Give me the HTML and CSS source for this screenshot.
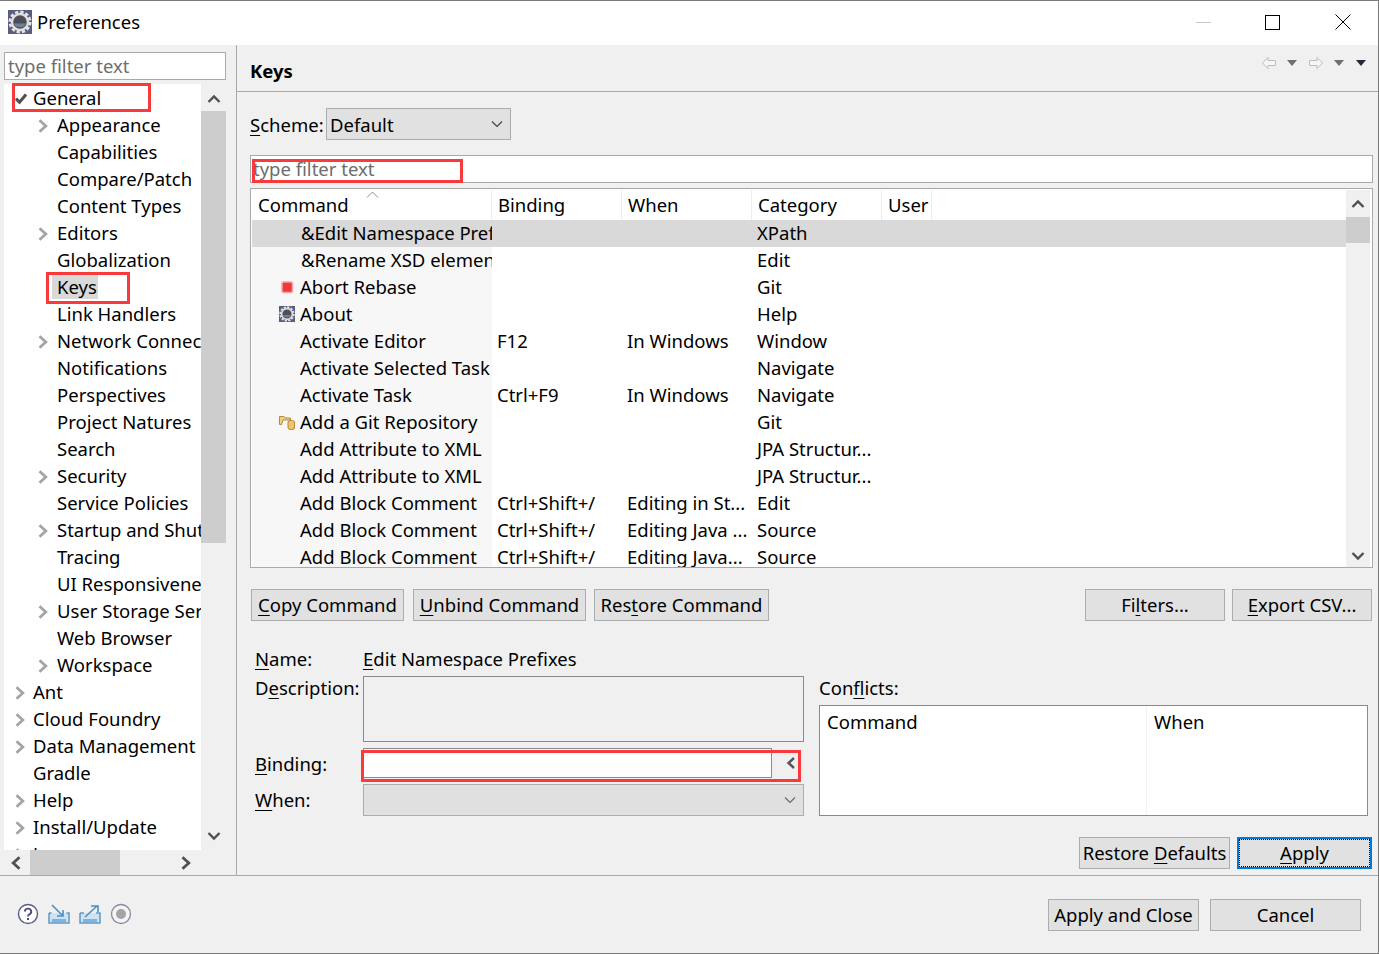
FILE: index.html
```html
<!DOCTYPE html>
<html lang="en">
<head>
<meta charset="utf-8">
<title>Preferences</title>
<link rel="stylesheet" href="styles.css">
</head>
<body>
<svg class="defs" width="0" height="0">
  <defs>
    <symbol id="gear" viewBox="0 0 24 24">
      <rect width="24" height="24" fill="#5b5d80"/>
      <circle cx="12" cy="12" r="10" fill="none" stroke="#e4e4e4" stroke-width="3" stroke-dasharray="3.300 1.930"/>
      <circle cx="12" cy="12" r="8" fill="#4d4e57" stroke="#dedede" stroke-width="2.400"/>
      <path d="M6 13.500h12a6.200 5 0 0 1-12 0z" fill="#70809a"/>
    </symbol>
    <symbol id="chev" viewBox="0 0 10 14"><path d="M1.500 1.200 7.800 7 1.500 12.800" fill="none" stroke="currentColor" stroke-width="2.800"/></symbol>
    <symbol id="up" viewBox="0 0 14 10"><path d="M1.500 8 7 2.500 12.500 8" fill="none" stroke="currentColor" stroke-width="2.400"/></symbol>
    <symbol id="down" viewBox="0 0 14 10"><path d="M1.500 2 7 7.500 12.500 2" fill="none" stroke="currentColor" stroke-width="2.400"/></symbol>
  </defs>
</svg>
<div class="window">
  <header class="titlebar">
    <svg class="app-icon"><use href="#gear"/></svg>
    <span class="title">Preferences</span>
    <div class="controls">
      <span class="min"></span>
      <span class="max"></span>
      <svg class="close" viewBox="0 0 16 16"><path d="M.5.500 15.500 15.500M15.500.500.500 15.500" stroke="#000" fill="none"/></svg>
    </div>
  </header>

  <div class="main">
    <aside class="left">
      <div class="filter left-filter">type filter text</div>
      <div class="tree-wrap">
        <div class="tree-view">
          <ul class="tree">
            <li class="root open"><svg class="tw tw-open" viewBox="0 0 12 12"><path d="M1 5.500 4.500 9.300 11 1.500" fill="none" stroke="#505050" stroke-width="3"/></svg>General</li>
            <li class="sub"><svg class="tw"><use href="#chev"/></svg>Appearance</li>
            <li class="sub">Capabilities</li>
            <li class="sub">Compare/Patch</li>
            <li class="sub">Content Types</li>
            <li class="sub"><svg class="tw"><use href="#chev"/></svg>Editors</li>
            <li class="sub">Globalization</li>
            <li class="sub"><span class="tree-sel">Keys</span></li>
            <li class="sub">Link Handlers</li>
            <li class="sub"><svg class="tw"><use href="#chev"/></svg>Network Connections</li>
            <li class="sub">Notifications</li>
            <li class="sub">Perspectives</li>
            <li class="sub">Project Natures</li>
            <li class="sub">Search</li>
            <li class="sub"><svg class="tw"><use href="#chev"/></svg>Security</li>
            <li class="sub">Service Policies</li>
            <li class="sub"><svg class="tw"><use href="#chev"/></svg>Startup and Shutdown</li>
            <li class="sub">Tracing</li>
            <li class="sub">UI Responsiveness Monitoring</li>
            <li class="sub"><svg class="tw"><use href="#chev"/></svg>User Storage Service</li>
            <li class="sub">Web Browser</li>
            <li class="sub"><svg class="tw"><use href="#chev"/></svg>Workspace</li>
            <li class="root"><svg class="tw"><use href="#chev"/></svg>Ant</li>
            <li class="root"><svg class="tw"><use href="#chev"/></svg>Cloud Foundry</li>
            <li class="root"><svg class="tw"><use href="#chev"/></svg>Data Management</li>
            <li class="root">Gradle</li>
            <li class="root"><svg class="tw"><use href="#chev"/></svg>Help</li>
            <li class="root"><svg class="tw"><use href="#chev"/></svg>Install/Update</li>
            <li class="root"><svg class="tw"><use href="#chev"/></svg>Java</li>
          </ul>
        </div>
        <div class="vbar tree-vbar">
          <svg class="arrow"><use href="#up"/></svg>
          <div class="thumb"></div>
          <svg class="arrow arrow-end"><use href="#down"/></svg>
        </div>
      </div>
      <div class="hbar">
        <svg class="harrow harrow-l" viewBox="0 0 10 14"><path d="M8.500 1.200 2.200 7 8.500 12.800" fill="none" stroke="currentColor" stroke-width="2.800"/></svg>
        <div class="hthumb"></div>
        <svg class="harrow harrow-r"><use href="#chev"/></svg>
      </div>
    </aside>

    <section class="right">
      <div class="page-head">
        <h1>Keys</h1>
        <div class="nav">
          <svg class="nav-arrow" viewBox="0 0 16 14"><path d="M7 1.500 1.500 7 7 12.500V9.500H14.500V4.500H7z" fill="#f6f6f6" stroke="#bdbdbd"/></svg>
          <span class="tri"></span>
          <svg class="nav-arrow nav-next" viewBox="0 0 16 14"><path d="M9 1.500 14.500 7 9 12.500V9.500H1.500V4.500H9z" fill="#f6f6f6" stroke="#bdbdbd"/></svg>
          <span class="tri"></span>
          <span class="tri tri-dark"></span>
        </div>
      </div>
      <div class="content">
        <div class="scheme">
          <span class="scheme-label"><u>S</u>cheme:</span>
          <div class="combo scheme-combo"><span>Default</span><svg class="combo-arrow" viewBox="0 0 12 8"><path d="M1 1.500 6 6.500 11 1.500" fill="none" stroke="#444" stroke-width="1.200"/></svg></div>
        </div>
        <div class="filter key-filter">type filter text</div>

        <div class="keys-table">
          <div class="table-main">
            <div class="row thead">
              <div class="th c1">Command<svg class="sort" viewBox="0 0 12 7"><path d="M.5 6.500 6 1 11.500 6.500" fill="none" stroke="#8a8a8a"/></svg></div>
              <div class="th c2">Binding</div>
              <div class="th c3">When</div>
              <div class="th c4">Category</div>
              <div class="th c5">User</div>
            </div>
            <div class="row selected"><div class="td c1 amp-first">&amp;Edit Namespace Prefixes</div><div class="td c2"></div><div class="td c3"></div><div class="td c4">XPath</div></div>
            <div class="row"><div class="td c1 amp-first">&amp;Rename XSD element</div><div class="td c2"></div><div class="td c3"></div><div class="td c4">Edit</div></div>
            <div class="row"><div class="td c1"><svg class="ricon" viewBox="0 0 16 16"><rect x="3" y="3" width="10.500" height="10.500" rx="1.500" fill="#f03a3a" stroke="#f5a5a5" stroke-width="1.500"/></svg>Abort Rebase</div><div class="td c2"></div><div class="td c3"></div><div class="td c4">Git</div></div>
            <div class="row"><div class="td c1"><svg class="ricon"><use href="#gear"/></svg>About</div><div class="td c2"></div><div class="td c3"></div><div class="td c4">Help</div></div>
            <div class="row"><div class="td c1">Activate Editor</div><div class="td c2">F12</div><div class="td c3">In Windows</div><div class="td c4">Window</div></div>
            <div class="row"><div class="td c1">Activate Selected Task</div><div class="td c2"></div><div class="td c3"></div><div class="td c4">Navigate</div></div>
            <div class="row"><div class="td c1">Activate Task</div><div class="td c2">Ctrl+F9</div><div class="td c3">In Windows</div><div class="td c4">Navigate</div></div>
            <div class="row"><div class="td c1"><svg class="ricon" viewBox="0 0 16 16"><path d="M.5 10.500V2.500H5L6 4H11.500V6H4L2.500 10.500z" fill="#f2cf80" stroke="#a88236" stroke-width=".9"/><path d="M9 8a3.200 1.500 0 0 1 6.500 0V14a3.200 1.500 0 0 1-6.500 0z" fill="#f0c46a" stroke="#a88236" stroke-width=".9"/></svg>Add a Git Repository</div><div class="td c2"></div><div class="td c3"></div><div class="td c4">Git</div></div>
            <div class="row"><div class="td c1">Add Attribute to XML</div><div class="td c2"></div><div class="td c3"></div><div class="td c4">JPA Structur...</div></div>
            <div class="row"><div class="td c1">Add Attribute to XML</div><div class="td c2"></div><div class="td c3"></div><div class="td c4">JPA Structur...</div></div>
            <div class="row"><div class="td c1">Add Block Comment</div><div class="td c2">Ctrl+Shift+/</div><div class="td c3">Editing in St...</div><div class="td c4">Edit</div></div>
            <div class="row"><div class="td c1">Add Block Comment</div><div class="td c2">Ctrl+Shift+/</div><div class="td c3">Editing Java ...</div><div class="td c4">Source</div></div>
            <div class="row"><div class="td c1">Add Block Comment</div><div class="td c2">Ctrl+Shift+/</div><div class="td c3">Editing Java...</div><div class="td c4">Source</div></div>
          </div>
          <div class="vbar table-vbar">
            <svg class="arrow"><use href="#up"/></svg>
            <div class="thumb"></div>
            <svg class="arrow arrow-end"><use href="#down"/></svg>
          </div>
        </div>

        <div class="cmd-buttons">
          <button class="btn b-copy"><u>C</u>opy Command</button>
          <button class="btn b-unbind"><u>U</u>nbind Command</button>
          <button class="btn b-restore">Res<u>t</u>ore Command</button>
          <span class="spacer"></span>
          <button class="btn b-filters">Fi<u>l</u>ters...</button>
          <button class="btn b-export"><u>E</u>xport CSV...</button>
        </div>

        <div class="details">
          <div class="form">
            <div class="f-row f-name"><span class="f-label"><u>N</u>ame:</span><span class="f-value"><u>E</u>dit Namespace Prefixes</span></div>
            <div class="f-row f-desc"><span class="f-label">D<u>e</u>scription:</span><div class="descbox"></div></div>
            <div class="f-row f-bind"><span class="f-label"><u>B</u>inding:</span><div class="bindbox"></div><svg class="bind-arrow" viewBox="0 0 10 14"><path d="M8 2 2.500 7 8 12" fill="none" stroke="#555" stroke-width="2.400"/></svg></div>
            <div class="f-row f-when"><span class="f-label"><u>W</u>hen:</span><div class="combo when-combo"><svg class="combo-arrow" viewBox="0 0 12 8"><path d="M1 1.500 6 6.500 11 1.500" fill="none" stroke="#666" stroke-width="1.100"/></svg></div></div>
          </div>
          <div class="conflicts">
            <div class="conf-label">Con<u>f</u>licts:</div>
            <div class="conf-table">
              <div class="conf-col conf-c1">Command</div>
              <div class="conf-col conf-c2">When</div>
            </div>
          </div>
        </div>

        <div class="page-buttons">
          <button class="btn b-defaults">Restore <u>D</u>efaults</button>
          <button class="btn b-apply"><span class="focus-in"><u>A</u>pply</span></button>
        </div>
      </div>
    </section>
  </div>

  <footer class="footer">
    <div class="foot-icons">
      <svg class="ficon" viewBox="0 0 22 22"><circle cx="11" cy="11" r="9.500" fill="#fff" stroke="#5a5a8c" stroke-width="1.400"/><path d="M7.800 8.500a3.200 3 0 1 1 4.600 2.800c-1 .6-1.400 1-1.400 2.200" fill="none" stroke="#4a4a80" stroke-width="1.900"/><rect x="10" y="15" width="2" height="2" fill="#4a4a80"/></svg>
      <svg class="ficon" viewBox="0 0 22 22"><path d="M1 10H3.500M18.500 10H21V20H1V10M5 10" fill="#cfe2f2" stroke="#5c9ac8" stroke-width="1.500"/><path d="M4 16H18V19H4z" fill="#7fb3d9"/><path d="M4 2 14 12M9 13H15V7" fill="none" stroke="#4c8fc2" stroke-width="1.600"/></svg>
      <svg class="ficon" viewBox="0 0 22 22"><path d="M1 10H5M17 10H21V20H1V10" fill="#cfe2f2" stroke="#5c9ac8" stroke-width="1.500"/><path d="M4 16H18V19H4z" fill="#7fb3d9"/><path d="M6 14 18 3M12 3H19V9" fill="none" stroke="#4c8fc2" stroke-width="1.600"/></svg>
      <svg class="ficon" viewBox="0 0 22 22"><circle cx="11" cy="11" r="9.500" fill="#f4f4f4" stroke="#8a8aa4" stroke-width="1.300"/><circle cx="11" cy="11" r="5" fill="#a4a4a4"/></svg>
    </div>
    <div class="foot-buttons">
      <button class="btn b-close">Apply and Close</button>
      <button class="btn b-cancel">Cancel</button>
    </div>
  </footer>

  <span class="mark mark-general"></span>
  <span class="mark mark-keys"></span>
  <span class="mark mark-filter"></span>
  <span class="mark mark-binding"></span>
</div>
</body>
</html>
```

FILE: styles.css
```css
* { box-sizing: border-box; }
html, body { margin: 0; padding: 0; }
body {
  width: 1379px;
  height: 954px;
  overflow: hidden;
  background: #fff;
  font-family: "Noto Sans", "Open Sans", sans-serif;
  font-size: 18.5px;
  color: #000;
}
.defs { position: absolute; }
u { text-decoration-thickness: 1px; text-underline-offset: 3px; }
button { font: inherit; color: inherit; }

.window {
  position: relative;
  width: 1379px;
  height: 954px;
  display: flex;
  flex-direction: column;
  border-top: 1px solid #7a7a7a;
  border-right: 1px solid #7a7a7a;
  border-bottom: 1px solid #7a7a7a;
  background: #f0f0f0;
}

/* title bar */
.titlebar {
  height: 44px;
  flex: none;
  display: flex;
  align-items: center;
  background: #fff;
  padding: 0 0 2px 8px;
}
.app-icon { width: 24px; height: 24px; margin-right: 5px; }
.title { margin-bottom: 2px; }
.controls { margin-left: auto; display: flex; align-items: center; }
.min { width: 15px; height: 1px; background: #c8c8c8; margin-right: 54px; }
.max { width: 15px; height: 15px; border: 1px solid #000; margin-right: 55px; }
.close { width: 16px; height: 16px; margin-right: 27px; }

/* panes */
.main { flex: 1; display: flex; min-height: 0; }
.left {
  width: 237px;
  flex: none;
  padding: 7px 10px 0 4px;
  border-right: 1px solid #a8a8a8;
}
.filter {
  height: 28px;
  background: #fff;
  border: 1px solid #a9a9a9;
  color: #6d6d6d;
  line-height: 26px;
  padding-left: 2px;
}
.left-filter { width: 222px; padding-left: 3px; }

.tree-wrap { display: flex; height: 766px; margin-top: 4px; width: 222px; }
.tree-view { width: 197px; overflow: hidden; background: #fff; }
.tree { list-style: none; margin: 1px 0 0; padding: 0; width: 400px; }
.tree li {
  height: 27px;
  line-height: 25px;
  white-space: nowrap;
  position: relative;
}
.tree .root { padding-left: 29px; }
.tree .sub { padding-left: 53px; }
.tree-sel { display: inline-block; height: 24px; line-height: 24px; background: #d9d9d9; padding: 0 1px 0 5px; margin-left: -5px; }
.tw { position: absolute; width: 10px; height: 14px; top: 7px; color: #a4a4a4; }
.root .tw { left: 11px; }
.sub .tw { left: 34px; }
.root .tw-open { left: 11px; width: 12px; height: 12px; top: 8px; }

.vbar { display: flex; flex-direction: column; align-items: center; background: #f0f0f0; }
.tree-vbar { width: 25px; }
.arrow { width: 14px; height: 10px; flex: none; color: #505050; margin: 10px 0 7px; }
.arrow-end { margin: auto 0 9px; }
.tree-vbar .thumb { width: 100%; height: 432px; background: #cdcdcd; }

.hbar { height: 25px; width: 222px; display: flex; align-items: center; background: #f0f0f0; }
.harrow { width: 10px; height: 14px; color: #505050; flex: none; }
.harrow-l { margin-left: 7px; margin-right: 9px; }
.hthumb { width: 90px; height: 100%; background: #cdcdcd; }
.harrow-r { margin-left: 61px; }

/* right */
.right { flex: 1; min-width: 0; display: flex; flex-direction: column; }
.page-head {
  height: 47px;
  flex: none;
  display: flex;
  align-items: center;
  padding: 4px 0 0 13px;
  border-bottom: 1px solid #a8a8a8;
}
h1 { margin: 0; font-size: 18.5px; font-weight: 700; }
.nav { margin-left: auto; display: flex; align-items: center; align-self: flex-start; margin-top: 7px; margin-right: 12px; }
.nav-arrow { width: 16px; height: 14px; margin-right: 10px; }
.nav-next { margin-left: 11px; }
.tri { width: 0; height: 0; border: 5.5px solid transparent; border-top: 6px solid #707070; border-bottom: 0; }
.tri-dark { border-top-color: #2e2438; margin-left: 12px; }

.content { padding: 0 6px 0 13px; }
.scheme { display: flex; align-items: center; height: 32px; margin-top: 16px; }
.scheme-label { width: 76px; flex: none; }
.combo { display: flex; align-items: center; background: #e1e1e1; border: 1px solid #adadad; }
.scheme-combo { width: 185px; height: 32px; padding-left: 3px; }
.combo-arrow { width: 12px; height: 8px; margin-left: auto; margin-right: 7px; }

.key-filter { width: 1123px; margin-top: 15px; }
.keys-table {
  width: 1123px;
  height: 380px;
  margin-top: 5px;
  border: 1px solid #a9a9a9;
  background: #fff;
  display: flex;
  padding: 1px 2px 0 1px;
}
.table-main { width: 1094px; overflow: hidden; }
.row { display: flex; height: 27px; line-height: 25px; white-space: nowrap; }
.thead { height: 30px; line-height: 30px; background: #fff; }
.th { position: relative; border-right: 1px solid #ececec; padding-left: 6px; }
.td { overflow: hidden; padding-left: 5px; position: relative; }
.c1 { width: 240px; flex: none; }
.c2, .c3, .c4 { width: 130px; flex: none; }
.c5 { width: 50px; flex: none; }
.td.c1 { padding-left: 48px; background: #f7f7f7; }
.td.amp-first { padding-left: 49px; }
.selected { background: #d9d9d9; }
.selected .td.c1 { background: #d9d9d9; }
.sort { position: absolute; left: 114px; top: 1px; width: 13px; height: 7px; }
.ricon { position: absolute; left: 27px; top: 5px; width: 16px; height: 16px; }
.table-vbar { width: 24px; }
.table-vbar .thumb { width: 100%; height: 26px; background: #cdcdcd; }
.table-vbar .arrow { margin: 9px 0 8px; }
.table-vbar .arrow-end { margin: auto 0 6px; }

.cmd-buttons { display: flex; margin-top: 21px; width: 1122px; padding-left: 1px; }
.btn {
  height: 32px;
  background: #e1e1e1;
  border: 1px solid #adadad;
  padding: 0;
  text-align: center;
  white-space: nowrap;
  line-height: 28px;
}
.spacer { flex: 1; }
.b-copy { width: 153px; }
.b-unbind { width: 173px; margin-left: 9px; }
.b-restore { width: 175px; margin-left: 8px; }
.b-filters { width: 140px; }
.b-export { width: 140px; margin-left: 7px; }

.details { display: flex; margin-top: 23px; position: relative; }
.form { width: 569px; padding-left: 5px; }
.f-row { display: flex; }
.f-label { width: 108px; flex: none; }
.f-name { height: 32px; line-height: 30px; }
.f-desc { height: 66px; line-height: 24px; }
.descbox { width: 441px; height: 66px; border: 1px solid #8a8a8a; }
.f-bind { height: 30px; margin-top: 6px; line-height: 30px; align-items: center; }
.f-bind .f-label { margin-top: 2px; }
.bindbox { width: 409px; height: 30px; background: #fff; border: 1px solid #8a8a8a; }
.bind-arrow { width: 10px; height: 14px; margin-left: 14px; }
.f-when { margin-top: 6px; height: 32px; line-height: 32px; }
.when-combo { width: 441px; height: 32px; background: #e0e0e0; }

.conflicts { padding-top: 61px; }
.conf-label { position: absolute; top: 32px; line-height: 24px; }
.conf-table {
  width: 549px;
  height: 111px;
  background: #fff;
  border: 1px solid #8a8a8a;
  display: flex;
  line-height: 32px;
}
.conf-col { height: 100%; }
.conf-c1 { width: 327px; padding-left: 7px; border-right: 1px solid #f2f2f2; }
.conf-c2 { padding-left: 7px; }

.page-buttons { display: flex; justify-content: flex-end; gap: 7px; margin-top: 21px; width: 1122px; }
.b-defaults { width: 151px; }
.b-apply { width: 135px; border: 2px solid #0078d7; }
.focus-in { display: block; height: 100%; border: 1px dotted #000; line-height: 26px; }

/* footer */
.footer {
  flex: none;
  height: 78px;
  display: flex;
  align-items: flex-start;
  border-top: 1px solid #a8a8a8;
  padding-left: 17px;
}
.foot-icons { display: flex; gap: 9px; margin-top: 27px; }
.ficon { width: 22px; height: 22px; }
.foot-buttons { margin-left: auto; display: flex; gap: 11px; margin-top: 23px; margin-right: 17px; }
.b-close, .b-cancel { width: 151px; }

/* red annotation rectangles */
.mark { position: absolute; border: 3px solid #f83a3a; }
.mark-general { left: 12px; top: 82px; width: 139px; height: 29px; }
.mark-keys { left: 46px; top: 271px; width: 84px; height: 32px; }
.mark-filter { left: 252px; top: 158px; width: 211px; height: 24px; }
.mark-binding { left: 361px; top: 749px; width: 440px; height: 32px; }
```
